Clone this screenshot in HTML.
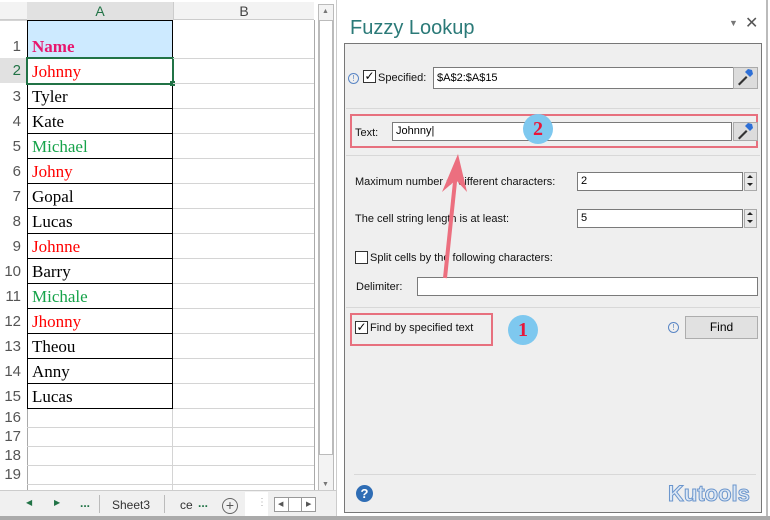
<!DOCTYPE html>
<html><head><meta charset="utf-8"><style>
*{box-sizing:border-box;margin:0;padding:0}
body{width:770px;height:520px;background:#fff;position:relative;overflow:hidden;font-family:"Liberation Sans",Tahoma,sans-serif}
.a{position:absolute}
.cell{position:absolute;left:27px;width:146px;height:26px;border:1px solid #000;font-family:"Liberation Serif",serif;font-size:17px;padding:3px 0 0 4px;background:#fff}
.rh{position:absolute;left:0;width:27px;text-align:right;padding-right:6px;font-size:15px;color:#555;font-family:"Liberation Sans",sans-serif}
.hl{position:absolute;left:27px;width:287px;height:1px;background:#d4d4d4}
.t{position:absolute;font-size:11px;color:#111;font-family:"Liberation Sans",Tahoma,sans-serif}
.inp{position:absolute;background:#fff;border:1px solid #7a7a7a;height:19px;font-size:11px;padding:2px 3px}
.sep{position:absolute;left:346px;width:414px;height:1px;background:#d8d8d8}
.cb{position:absolute;width:13px;height:13px;border:1px solid #333;background:#fff}
.pin{position:absolute;width:25px;height:19px;background:#dcdcdc;border:1px solid #aaa}
.circ{position:absolute;width:30px;height:30px;border-radius:50%;background:#7ec8ef;color:#e8173a;font:bold 20px "Liberation Serif",serif;text-align:center;line-height:30px}
.spin{position:absolute;width:13px;height:19px;border:1px solid #aaa;background:#e8e8e8}
</style></head><body>
<div class="a" style="left:0;top:0;width:336px;height:520px;background:#fff"></div>
<div class="a" style="left:0;top:2px;width:314px;height:18px;background:#f3f3f3;border-bottom:1px solid #ccc"></div>
<div class="a" style="left:27px;top:2px;width:146px;height:18px;background:#e1e1e1;color:#217346;font-size:14px;text-align:center;line-height:18px">A</div>
<div class="a" style="left:173px;top:2px;width:141px;height:18px;color:#444;font-size:14px;text-align:center;line-height:18px;border-left:1px solid #ccc">B</div>
<div class="a" style="left:314px;top:20px;width:1px;height:470px;background:#aaa"></div>
<div class="a" style="left:172px;top:20px;width:1px;height:470px;background:#d4d4d4"></div>
<div class="a" style="left:27px;top:20px;width:1px;height:470px;background:#aaa"></div>
<div class="cell" style="top:20px;height:39px;background:#cdeaff;color:#e8176e;font-weight:bold;padding-top:16px">Name</div>
<div class="rh" style="top:38px">1</div>
<div class="cell" style="top:58px;color:#f00">Johnny</div>
<div class="rh" style="background:#e1e1e1;color:#217346;height:25px;top:58px;padding-top:4px">2</div>
<div class="cell" style="top:83px">Tyler</div><div class="rh" style="top:88px">3</div>
<div class="cell" style="top:108px">Kate</div><div class="rh" style="top:113px">4</div>
<div class="cell" style="top:133px;color:#16a34a">Michael</div><div class="rh" style="top:138px">5</div>
<div class="cell" style="top:158px;color:#f00">Johny</div><div class="rh" style="top:163px">6</div>
<div class="cell" style="top:183px">Gopal</div><div class="rh" style="top:188px">7</div>
<div class="cell" style="top:208px">Lucas</div><div class="rh" style="top:213px">8</div>
<div class="cell" style="top:233px;color:#f00">Johnne</div><div class="rh" style="top:238px">9</div>
<div class="cell" style="top:258px">Barry</div><div class="rh" style="top:263px">10</div>
<div class="cell" style="top:283px;color:#16a34a">Michale</div><div class="rh" style="top:288px">11</div>
<div class="cell" style="top:308px;color:#f00">Jhonny</div><div class="rh" style="top:313px">12</div>
<div class="cell" style="top:333px">Theou</div><div class="rh" style="top:338px">13</div>
<div class="cell" style="top:358px">Anny</div><div class="rh" style="top:363px">14</div>
<div class="cell" style="top:383px">Lucas</div><div class="rh" style="top:388px">15</div>
<div class="a" style="left:26px;top:57px;width:148px;height:28px;border:2px solid #217346"></div>
<div class="a" style="left:170px;top:81px;width:5px;height:5px;background:#217346"></div>
<div class="hl" style="top:58px;left:173px;width:141px"></div>
<div class="hl" style="top:83px;left:173px;width:141px"></div><div class="hl" style="top:108px;left:173px;width:141px"></div>
<div class="hl" style="top:133px;left:173px;width:141px"></div><div class="hl" style="top:158px;left:173px;width:141px"></div>
<div class="hl" style="top:183px;left:173px;width:141px"></div><div class="hl" style="top:208px;left:173px;width:141px"></div>
<div class="hl" style="top:233px;left:173px;width:141px"></div><div class="hl" style="top:258px;left:173px;width:141px"></div>
<div class="hl" style="top:283px;left:173px;width:141px"></div><div class="hl" style="top:308px;left:173px;width:141px"></div>
<div class="hl" style="top:333px;left:173px;width:141px"></div><div class="hl" style="top:358px;left:173px;width:141px"></div>
<div class="hl" style="top:383px;left:173px;width:141px"></div><div class="hl" style="top:408px;left:173px;width:141px"></div>
<div class="hl" style="top:427px"></div><div class="hl" style="top:446px"></div><div class="hl" style="top:465px"></div><div class="hl" style="top:484px"></div>
<div class="hl" style="top:20px;left:0;width:27px"></div>
<div class="rh" style="top:409px">16</div><div class="rh" style="top:428px">17</div><div class="rh" style="top:447px">18</div><div class="rh" style="top:466px">19</div>
<div class="a" style="left:318px;top:4px;width:16px;height:488px;border:1px solid #bbb;background:#f3f3f3"></div>
<div class="a" style="left:319px;top:20px;width:14px;height:435px;background:#fff;border:1px solid #bbb"></div>
<div class="a" style="left:322px;top:8px;font-size:7px;color:#777">▲</div>
<div class="a" style="left:322px;top:481px;font-size:7px;color:#777">▼</div>
<div class="a" style="left:336px;top:0;width:1px;height:516px;background:#ccc"></div>
<div class="a" style="left:0;top:490px;width:336px;height:26px;background:#f0f0f0;border-top:1px solid #ccc"></div>
<div class="a" style="left:26px;top:498px;font-size:8px;color:#217346">◀</div>
<div class="a" style="left:54px;top:498px;font-size:8px;color:#217346">▶</div>
<div class="a" style="left:80px;top:496px;font-size:12px;color:#217346;font-weight:bold">...</div>
<div class="a" style="left:99px;top:495px;width:1px;height:18px;background:#bbb"></div>
<div class="a" style="left:112px;top:498px;font-size:12px;color:#333">Sheet3</div>
<div class="a" style="left:164px;top:495px;width:1px;height:18px;background:#bbb"></div>
<div class="a" style="left:180px;top:498px;font-size:12px;color:#333">ce</div>
<div class="a" style="left:198px;top:496px;font-size:12px;color:#217346;font-weight:bold">...</div>
<div class="a" style="left:222px;top:498px;width:16px;height:16px;border:1px solid #666;border-radius:50%;font-size:14px;line-height:13px;text-align:center;color:#555">+</div>
<div class="a" style="left:245px;top:492px;width:23px;height:24px;background:#fff"></div>
<div class="a" style="left:257px;top:497px;font-size:10px;color:#aaa">⋮</div>
<div class="a" style="left:274px;top:497px;width:42px;height:15px;border:1px solid #999;background:#fff"></div>
<div class="a" style="left:288px;top:497px;width:14px;height:15px;border-left:1px solid #999;border-right:1px solid #999"></div>
<div class="a" style="left:278px;top:500px;font-size:7px;color:#555">◀</div>
<div class="a" style="left:306px;top:500px;font-size:7px;color:#555">▶</div>
<div class="a" style="left:0;top:516px;width:770px;height:4px;background:#aaa"></div>
<div class="a" style="left:337px;top:0;width:433px;height:516px;background:#fff"></div>
<div class="a" style="left:766px;top:0;width:2px;height:516px;background:#bbb"></div>
<div class="a" style="left:350px;top:17px;font-size:20px;color:#2b7a78">Fuzzy Lookup</div>
<div class="a" style="left:729px;top:18px;font-size:9px;color:#777">▼</div>
<div class="a" style="left:745px;top:13px;font-size:16px;color:#555">✕</div>
<div class="a" style="left:344px;top:43px;width:418px;height:470px;background:#efefef;border:1px solid #777"></div>
<div class="a" style="left:348px;top:73px;width:11px;height:11px;border:1px solid #5a86c5;border-radius:50%;font-size:8px;color:#5a86c5;text-align:center;line-height:9px">!</div>
<div class="cb" style="left:363px;top:70px;font-size:12px;line-height:10px;text-align:center">✓</div>
<div class="t" style="left:378px;top:72px">Specified:</div>
<div class="inp" style="left:433px;top:67px;width:301px;height:22px;padding-top:4px">$A$2:$A$15</div>
<div class="pin" style="left:733px;top:67px;height:22px"></div>
<div class="sep" style="top:108px"></div>
<div class="a" style="left:350px;top:114px;width:408px;height:34px;border:2px solid #e7707e"></div>
<div class="t" style="left:355px;top:127px">Text:</div>
<div class="inp" style="left:392px;top:122px;width:340px">Johnny|</div>
<div class="pin" style="left:733px;top:122px"></div>
<div class="sep" style="top:155px"></div>
<div class="t" style="left:355px;top:176px">Maximum number of different characters:</div>
<div class="inp" style="left:577px;top:172px;width:166px">2</div>
<div class="spin" style="left:744px;top:172px"></div>
<div class="t" style="left:355px;top:213px">The cell string length is at least:</div>
<div class="inp" style="left:577px;top:209px;width:166px">5</div>
<div class="spin" style="left:744px;top:209px"></div>
<div class="cb" style="left:355px;top:251px"></div>
<div class="t" style="left:370px;top:252px">Split cells by the following characters:</div>
<div class="t" style="left:356px;top:281px">Delimiter:</div>
<div class="inp" style="left:417px;top:277px;width:341px"></div>
<div class="sep" style="top:307px"></div>
<div class="a" style="left:350px;top:313px;width:143px;height:33px;border:2px solid #e7707e"></div>
<div class="cb" style="left:355px;top:321px;font-size:12px;line-height:10px;text-align:center">✓</div>
<div class="t" style="left:370px;top:322px">Find by specified text</div>
<div class="a" style="left:668px;top:322px;width:11px;height:11px;border:1px solid #5a86c5;border-radius:50%;font-size:8px;color:#5a86c5;text-align:center;line-height:9px">!</div>
<div class="a" style="left:685px;top:316px;width:73px;height:23px;background:#e1e1e1;border:1px solid #adadad;font-size:12px;text-align:center;line-height:21px">Find</div>
<div class="sep" style="top:474px;left:354px;width:402px"></div>
<div class="a" style="left:356px;top:485px;width:17px;height:17px;border-radius:50%;background:#2f6db5;color:#fff;font-weight:bold;font-size:13px;text-align:center;line-height:17px">?</div>
<div class="a" style="left:668px;top:481px;font-size:22px;font-weight:bold;color:#dde8f5;-webkit-text-stroke:1px #6a95cc">Kutools</div>
<svg class="a" style="left:0;top:0" width="770" height="520">
<line x1="445" y1="278" x2="456" y2="172" stroke="#ec6f7f" stroke-width="4"/>
<polygon points="458,154 442,192 456,180 467,192" fill="#ec6f7f"/>
<path d="M746,76 l-8,8 l1.5,1.5 l8,-8 z" fill="#333"/><path d="M745,72 l5,5 l3,-3 l-1,-4 l-4,-1z" fill="#2d6fd6"/>
<path d="M746,130 l-8,8 l1.5,1.5 l8,-8 z" fill="#333"/><path d="M745,126 l5,5 l3,-3 l-1,-4 l-4,-1z" fill="#2d6fd6"/>
<path d="M747,178 l3,-3 l3,3z M747,183 l3,3 l3,-3z M747,215 l3,-3 l3,3z M747,220 l3,3 l3,-3z" fill="#222"/>
</svg>
<div class="circ" style="left:523px;top:114px">2</div>
<div class="circ" style="left:508px;top:315px">1</div>
</body></html>
